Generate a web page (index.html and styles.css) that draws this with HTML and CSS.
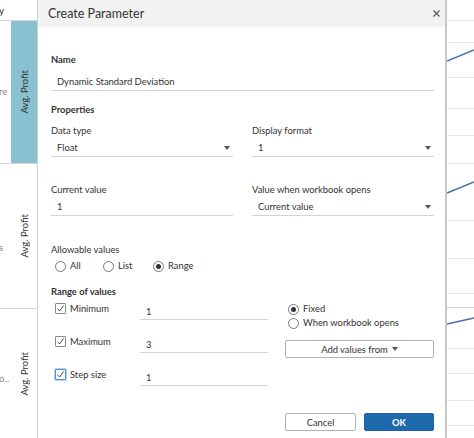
FILE: index.html
```html
<!DOCTYPE html>
<html>
<head>
<meta charset="utf-8">
<link rel="stylesheet" href="styles.css">
</head>
<body>
<div class="screen">
  <div class="sheet-left">
    <div class="axis-head"><span>y</span></div>
    <div class="pane pane-1">
      <div class="edge"><span>re</span></div>
      <div class="hdr sel"><span>Avg. Profit</span></div>
    </div>
    <div class="pane pane-2">
      <div class="edge"><span>s</span></div>
      <div class="hdr"><span>Avg. Profit</span></div>
    </div>
    <div class="pane pane-3">
      <div class="edge"><span>o..</span></div>
      <div class="hdr"><span>Avg. Profit</span></div>
    </div>
  </div>

  <div class="dialog">
    <div class="dlg-head">
      <span class="title">Create Parameter</span>
      <svg class="close" width="7" height="7" viewBox="0 0 7 7"><path d="M0.5 0.5L6.5 6.5M6.5 0.5L0.5 6.5" stroke="#555" stroke-width="1.1" fill="none"/></svg>
    </div>
    <div class="dlg-body">
      <div class="label section">Name</div>
      <div class="field name-field">Dynamic Standard Deviation</div>

      <div class="label section props">Properties</div>
      <div class="two-col first-row">
        <div class="cell">
          <div class="label">Data type</div>
          <div class="field select">Float<i class="caret"></i></div>
        </div>
        <div class="cell">
          <div class="label">Display format</div>
          <div class="field select">1<i class="caret"></i></div>
        </div>
      </div>
      <div class="two-col second-row">
        <div class="cell">
          <div class="label">Current value</div>
          <div class="field">1</div>
        </div>
        <div class="cell">
          <div class="label">Value when workbook opens</div>
          <div class="field select">Current value<i class="caret"></i></div>
        </div>
      </div>

      <div class="label allow">Allowable values</div>
      <div class="radio-row">
        <label class="radio r-all"><span class="circle"></span>All</label>
        <label class="radio r-list"><span class="circle"></span>List</label>
        <label class="radio"><span class="circle on"></span>Range</label>
      </div>

      <div class="label section range-title">Range of values</div>
      <div class="range">
        <div class="range-left">
          <div class="range-row">
            <label class="check"><span class="box"><svg width="9" height="9" viewBox="0 0 9 9"><path d="M1.5 4.8L3.6 7L7.6 1.5" stroke="#444" stroke-width="1" fill="none"/></svg></span>Minimum</label>
            <div class="field small">1</div>
          </div>
          <div class="range-row">
            <label class="check"><span class="box"><svg width="9" height="9" viewBox="0 0 9 9"><path d="M1.5 4.8L3.6 7L7.6 1.5" stroke="#444" stroke-width="1" fill="none"/></svg></span>Maximum</label>
            <div class="field small">3</div>
          </div>
          <div class="range-row">
            <label class="check"><span class="box focus"><svg width="9" height="9" viewBox="0 0 9 9"><path d="M1.5 4.8L3.6 7L7.6 1.5" stroke="#444" stroke-width="1" fill="none"/></svg></span>Step size</label>
            <div class="field small">1</div>
          </div>
        </div>
        <div class="range-right">
          <label class="radio"><span class="circle on"></span>Fixed</label>
          <label class="radio"><span class="circle"></span>When workbook opens</label>
          <div class="btn add">Add values from<i class="caret dark"></i></div>
        </div>
      </div>

      <div class="footer">
        <div class="btn cancel">Cancel</div>
        <div class="btn ok">OK</div>
      </div>
    </div>
  </div>

  <div class="sheet-right">
    <svg width="27" height="438" viewBox="0 0 27 438">
      <g stroke="#e6e6e6" stroke-width="1">
        <line x1="0" y1="20.5" x2="27" y2="20.5"/>
        <line x1="0" y1="42.5" x2="27" y2="42.5"/>
        <line x1="0" y1="77.5" x2="27" y2="77.5"/>
        <line x1="0" y1="108.5" x2="27" y2="108.5"/>
        <line x1="0" y1="135.5" x2="27" y2="135.5"/>
        <line x1="0" y1="163.5" x2="27" y2="163.5"/>
        <line x1="0" y1="220.5" x2="27" y2="220.5"/>
        <line x1="0" y1="258.5" x2="27" y2="258.5"/>
        <line x1="0" y1="293.5" x2="27" y2="293.5"/>
        <line x1="0" y1="348.5" x2="27" y2="348.5"/>
        <line x1="0" y1="373.5" x2="27" y2="373.5"/>
        <line x1="0" y1="400.5" x2="27" y2="400.5"/>
        <line x1="0" y1="425.5" x2="27" y2="425.5"/>
      </g>
      <g stroke="#d0d0d0" stroke-width="1">
        <line x1="0" y1="307.5" x2="27" y2="307.5"/>
      </g>
      <g stroke="#4a6fa5" stroke-width="1.6" fill="none">
        <line x1="0" y1="61" x2="27" y2="50"/>
        <line x1="0" y1="193" x2="27" y2="182"/>
        <line x1="0" y1="324" x2="27" y2="318"/>
      </g>
    </svg>
  </div>
</div>
</body>
</html>
```

FILE: styles.css
```css
html, body {
  margin: 0;
  padding: 0;
}
body {
  width: 474px;
  height: 438px;
  overflow: hidden;
  background: #fff;
  font-family: Lato, "Liberation Sans", sans-serif;
  color: #333;
}
.screen {
  display: grid;
  grid-template-columns: 37px 410px 27px;
  height: 438px;
}

/* left worksheet strip */
.sheet-left {
  display: flex;
  flex-direction: column;
  overflow: hidden;
}
.axis-head {
  height: 20px;
  border-bottom: 1px solid #d6d6d6;
  font-size: 10px;
  line-height: 20px;
  color: #333;
  overflow: hidden;
}
.axis-head span {
  display: block;
  margin-left: -1px;
}
.pane {
  display: flex;
  border-bottom: 1px solid #d6d6d6;
}
.pane-1 { height: 142px; }
.pane-2 { height: 144px; }
.pane-3 { flex: 1; border-bottom: none; }
.edge {
  width: 11px;
  display: flex;
  overflow: hidden;
  font-size: 9.5px;
  color: #888;
  align-items: flex-start;
}
.edge span { margin-left: -1px; }
.pane-1 .edge { padding-top: 65px; }
.pane-2 .edge { padding-top: 78px; }
.pane-3 .edge { padding-top: 64px; }
.hdr {
  width: 26px;
  display: flex;
  align-items: center;
  justify-content: center;
  font-size: 9.5px;
  color: #333;
}
.hdr span {
  writing-mode: vertical-rl;
  transform: rotate(180deg);
}
.hdr.sel { background: #88c1d0; }

/* dialog */
.dialog {
  border-left: 1px solid #cfcfcf;
  border-right: 2px solid #c8c8c8;
  display: flex;
  flex-direction: column;
  background: #fff;
  min-width: 0;
}
.dlg-head {
  height: 27px;
  flex: none;
  background: #f2f2f2;
  display: flex;
  align-items: center;
  justify-content: space-between;
  padding: 0 5px 0 10px;
}
.title {
  font-size: 12.5px;
  color: #333;
}
.dlg-body {
  flex: 1;
  display: flex;
  flex-direction: column;
  padding: 26px 11px 7px 13px;
}
.label {
  font-size: 9.4px;
  line-height: 14px;
  color: #333;
}
.section { font-weight: 700; }
.field {
  position: relative;
  height: 17px;
  line-height: 17px;
  border-bottom: 1px solid #d4d4d4;
  padding-left: 6px;
  font-size: 9.4px;
  color: #333;
}
.name-field { margin-top: 6px; }
.props { margin-top: 12px; }
.two-col {
  display: grid;
  grid-template-columns: 182px 182px;
  column-gap: 19px;
}
.first-row { margin-top: 7px; }
.second-row { margin-top: 26px; }
.cell .field { margin-top: 1px; }
.select {
  display: flex;
  justify-content: space-between;
  align-items: center;
  padding-right: 3px;
}
.caret {
  width: 0;
  height: 0;
  border-left: 3px solid transparent;
  border-right: 3px solid transparent;
  border-top: 4px solid #555;
}
.allow { margin-top: 27px; }
.radio-row {
  margin-top: 2px;
  display: flex;
  height: 14px;
  padding-left: 4px;
}
.radio {
  display: flex;
  align-items: center;
  gap: 4px;
  font-size: 9.4px;
  line-height: 14px;
  color: #333;
}
.r-all { width: 48px; }
.r-list { width: 50px; }
.circle {
  box-sizing: border-box;
  width: 11px;
  height: 11px;
  border: 1px solid #7a7a7a;
  border-radius: 50%;
  display: flex;
  align-items: center;
  justify-content: center;
  background: #fff;
}
.circle.on::after {
  content: "";
  width: 5px;
  height: 5px;
  border-radius: 50%;
  background: #333;
}
.range-title { margin-top: 12px; }
.range {
  display: grid;
  grid-template-columns: 217px 149px;
  column-gap: 17px;
}
.range-left {
  display: flex;
  flex-direction: column;
  gap: 12px;
}
.range-row {
  display: flex;
  height: 21px;
}
.check {
  width: 89px;
  display: flex;
  align-items: center;
  gap: 4px;
  padding-left: 4px;
  padding-bottom: 2px;
  box-sizing: border-box;
  font-size: 9.4px;
  color: #333;
}
.box {
  box-sizing: border-box;
  width: 11px;
  height: 11px;
  border: 1px solid #8a8a8a;
  border-radius: 1px;
  display: flex;
  align-items: center;
  justify-content: center;
  background: #fff;
}
.box.focus {
  border-color: #4b8fd6;
  box-shadow: 0 0 0 1px #b8d4f2;
}
.field.small {
  width: 128px;
  box-sizing: border-box;
  align-self: flex-end;
}
.range-right {
  display: flex;
  flex-direction: column;
  padding-top: 3px;
}
.range-right .radio { padding-left: 3px; }
.btn {
  box-sizing: border-box;
  height: 18px;
  border: 1px solid #b3b3b3;
  border-radius: 2px;
  display: flex;
  align-items: center;
  justify-content: center;
  font-size: 9.4px;
  color: #333;
  background: #fff;
}
.add {
  margin-top: 10px;
  gap: 4px;
}
.caret.dark { border-top-color: #555; }
.footer {
  margin-top: auto;
  display: flex;
  justify-content: flex-end;
  gap: 8px;
}
.cancel { width: 71px; }
.ok {
  width: 70px;
  border-color: #1f64a3;
  background: #1f69ad;
  color: #fff;
  font-weight: 700;
}

/* right worksheet strip */
.sheet-right {
  overflow: hidden;
}
.sheet-right svg { display: block; }
```
